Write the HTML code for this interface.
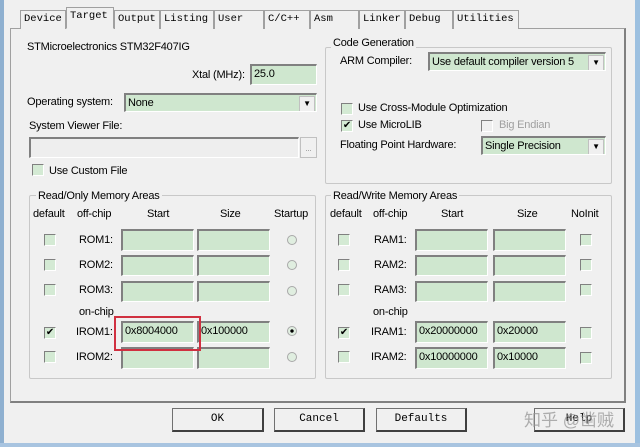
<!DOCTYPE html><html><head><meta charset="utf-8"><style>
body{margin:0;width:640px;height:447px;background:#f0f0f0;position:relative;overflow:hidden;font-family:"Liberation Sans",sans-serif;font-size:11px;letter-spacing:-0.2px;color:#000}
div,span{position:absolute;box-sizing:border-box}
.t{white-space:nowrap;line-height:14px}
.tab{top:10px;height:19px;border:1px solid #a0a0a0;border-bottom:none;font-family:"Liberation Mono",monospace;font-size:10.5px;letter-spacing:0;line-height:16px;padding-left:3px;background:#f0f0f0}
.f{background:#cfe7cf;border-top:2px solid #808080;border-left:2px solid #808080;border-right:1px solid #fff;border-bottom:1px solid #fff;padding-left:2px;line-height:16px;white-space:nowrap;overflow:hidden}
.cb{width:12px;height:12px;background:#d4ead4;border-top:1px solid #808080;border-left:1px solid #808080;border-right:1px solid #fff;border-bottom:1px solid #fff}
.g{border:1px solid #c8c8c8;border-radius:2px}
.gt{background:#f0f0f0;padding:0 2px}
.rd{width:10px;height:10px;border-radius:50%;background:#e0eee0;border:1px solid #a8a8a8}
.dd{width:16px;height:16px;right:1px;top:1px;background:#f0f0f0;border:1px solid #c0c0c0;font-size:8px;text-align:center;line-height:14px}
.btn{top:408px;height:24px;border:1px solid #707070;border-right:2px solid #404040;border-bottom:2px solid #404040;background:#f0f0f0;font-family:"Liberation Mono",monospace;font-size:11px;letter-spacing:0;text-align:center;line-height:20px}
</style></head><body>
<div style="left:0;top:0;width:4px;height:447px;background:#8fb0d0"></div>
<div style="right:0;top:0;width:5px;height:447px;background:#9cc0e0"></div>
<div style="left:0;bottom:0;width:640px;height:4px;background:#a8c4e0"></div>
<div style="left:10px;top:28px;width:616px;height:375px;border:1px solid #a0a0a0;border-right:2px solid #808080;border-bottom:2px solid #808080"></div>
<div class="tab" style="left:20px;width:46px">Device</div>
<div class="tab" style="left:66px;top:7px;height:22px;width:48px;border-bottom:1px solid #f0f0f0;z-index:2;background:#f0f0f0">Target</div>
<div class="tab" style="left:114px;width:46px">Output</div>
<div class="tab" style="left:160px;width:54px">Listing</div>
<div class="tab" style="left:214px;width:50px">User</div>
<div class="tab" style="left:264px;width:46px">C/C++</div>
<div class="tab" style="left:310px;width:49px">Asm</div>
<div class="tab" style="left:359px;width:46px">Linker</div>
<div class="tab" style="left:405px;width:48px">Debug</div>
<div class="tab" style="left:453px;width:66px">Utilities</div>

<div class="t" style="left:27px;top:40px">STMicroelectronics STM32F407IG</div>
<div class="t" style="left:192px;top:68px">Xtal (MHz):</div>
<div class="f" style="left:250px;top:64px;width:67px;height:21px">25.0</div>
<div class="t" style="left:27px;top:95px">Operating system:</div>
<div class="f" style="left:124px;top:93px;width:193px;height:19px">None<div class="dd">▼</div></div>
<div class="t" style="left:29px;top:119px">System Viewer File:</div>
<div style="left:29px;top:137px;width:270px;height:21px;border-top:2px solid #808080;border-left:2px solid #808080;border-right:1px solid #fff;border-bottom:1px solid #fff;background:#eee"></div>
<div style="left:300px;top:137px;width:17px;height:21px;border:1px solid #c0c0c0;font-size:8px;color:#888;text-align:center;line-height:22px">...</div>
<div class="cb" style="left:32px;top:164px"></div>
<div class="t" style="left:49px;top:164px">Use Custom File</div>

<div class="g" style="left:325px;top:47px;width:287px;height:137px"></div>
<div class="t gt" style="left:331px;top:36px">Code Generation</div>
<div class="t" style="left:340px;top:54px">ARM Compiler:</div>
<div class="f" style="left:428px;top:52px;width:178px;height:19px">Use default compiler version 5<div class="dd">▼</div></div>
<div class="cb" style="left:341px;top:103px"></div>
<div class="t" style="left:358px;top:101px">Use Cross-Module Optimization</div>
<div class="cb" style="left:341px;top:120px;font-size:10px;line-height:9px;text-align:center">✔</div>
<div class="t" style="left:358px;top:118px">Use MicroLIB</div>
<div class="cb" style="left:481px;top:120px;background:#f0f0f0"></div>
<div class="t" style="left:499px;top:118px;color:#a0a0a0">Big Endian</div>
<div class="t" style="left:340px;top:138px">Floating Point Hardware:</div>
<div class="f" style="left:481px;top:136px;width:125px;height:19px">Single Precision<div class="dd">▼</div></div>

<div class="g" style="left:29px;top:195px;width:287px;height:184px"></div>
<div class="t gt" style="left:36px;top:189px">Read/Only Memory Areas</div>
<div class="t" style="left:33px;top:207px">default</div>
<div class="t" style="left:77px;top:207px">off-chip</div>
<div class="t" style="left:147px;top:207px">Start</div>
<div class="t" style="left:220px;top:207px">Size</div>
<div class="t" style="left:274px;top:207px">Startup</div>
<div class="t" style="left:79px;top:305px">on-chip</div>

<div class="g" style="left:325px;top:195px;width:287px;height:184px"></div>
<div class="t gt" style="left:331px;top:189px">Read/Write Memory Areas</div>
<div class="t" style="left:330px;top:207px">default</div>
<div class="t" style="left:373px;top:207px">off-chip</div>
<div class="t" style="left:441px;top:207px">Start</div>
<div class="t" style="left:517px;top:207px">Size</div>
<div class="t" style="left:571px;top:207px">NoInit</div>
<div class="t" style="left:373px;top:305px">on-chip</div>

<div class="cb" style="left:44px;top:234px"></div><div class="t" style="left:79px;top:233px">ROM1:</div>
<div class="f" style="left:121px;top:229px;width:73px;height:22px"></div><div class="f" style="left:197px;top:229px;width:73px;height:22px"></div><div class="rd" style="left:287px;top:235px"></div>
<div class="cb" style="left:44px;top:259px"></div><div class="t" style="left:79px;top:258px">ROM2:</div>
<div class="f" style="left:121px;top:255px;width:73px;height:21px"></div><div class="f" style="left:197px;top:255px;width:73px;height:21px"></div><div class="rd" style="left:287px;top:260px"></div>
<div class="cb" style="left:44px;top:284px"></div><div class="t" style="left:79px;top:283px">ROM3:</div>
<div class="f" style="left:121px;top:281px;width:73px;height:21px"></div><div class="f" style="left:197px;top:281px;width:73px;height:21px"></div><div class="rd" style="left:287px;top:286px"></div>
<div class="cb" style="left:44px;top:327px;font-size:10px;line-height:9px;text-align:center">✔</div><div class="t" style="left:76px;top:325px">IROM1:</div>
<div class="f" style="left:121px;top:321px;width:73px;height:22px">0x8004000</div><div class="f" style="left:197px;top:321px;width:73px;height:22px">0x100000</div><div class="rd" style="left:287px;top:326px;background:radial-gradient(#000 25%,#e0eee0 35%)"></div>
<div class="cb" style="left:44px;top:351px"></div><div class="t" style="left:76px;top:350px">IROM2:</div>
<div class="f" style="left:121px;top:347px;width:73px;height:22px"></div><div class="f" style="left:197px;top:347px;width:73px;height:22px"></div><div class="rd" style="left:287px;top:352px"></div>
<div style="left:114px;top:316px;width:87px;height:35px;border:2px solid #d03040"></div>

<div class="cb" style="left:338px;top:234px"></div><div class="t" style="left:374px;top:233px">RAM1:</div>
<div class="f" style="left:415px;top:229px;width:73px;height:22px"></div><div class="f" style="left:493px;top:229px;width:73px;height:22px"></div><div class="cb" style="left:580px;top:234px"></div>
<div class="cb" style="left:338px;top:259px"></div><div class="t" style="left:374px;top:258px">RAM2:</div>
<div class="f" style="left:415px;top:255px;width:73px;height:21px"></div><div class="f" style="left:493px;top:255px;width:73px;height:21px"></div><div class="cb" style="left:580px;top:259px"></div>
<div class="cb" style="left:338px;top:284px"></div><div class="t" style="left:374px;top:283px">RAM3:</div>
<div class="f" style="left:415px;top:281px;width:73px;height:21px"></div><div class="f" style="left:493px;top:281px;width:73px;height:21px"></div><div class="cb" style="left:580px;top:284px"></div>
<div class="cb" style="left:338px;top:327px;font-size:10px;line-height:9px;text-align:center">✔</div><div class="t" style="left:371px;top:325px">IRAM1:</div>
<div class="f" style="left:415px;top:321px;width:73px;height:22px">0x20000000</div><div class="f" style="left:493px;top:321px;width:73px;height:22px">0x20000</div><div class="cb" style="left:580px;top:327px"></div>
<div class="cb" style="left:338px;top:351px"></div><div class="t" style="left:371px;top:350px">IRAM2:</div>
<div class="f" style="left:415px;top:347px;width:73px;height:22px">0x10000000</div><div class="f" style="left:493px;top:347px;width:73px;height:22px">0x10000</div><div class="cb" style="left:580px;top:352px"></div>

<div class="btn" style="left:172px;width:92px">OK</div>
<div class="btn" style="left:274px;width:91px">Cancel</div>
<div class="btn" style="left:376px;width:91px">Defaults</div>
<div class="btn" style="left:534px;width:91px">Help</div>
<div class="t" style="left:524px;top:411px;font-family:'Liberation Sans','Noto Sans CJK SC',sans-serif;font-size:17px;letter-spacing:0;line-height:20px;color:rgba(150,150,150,0.75)">知乎 @凿贼</div>
</body></html>
